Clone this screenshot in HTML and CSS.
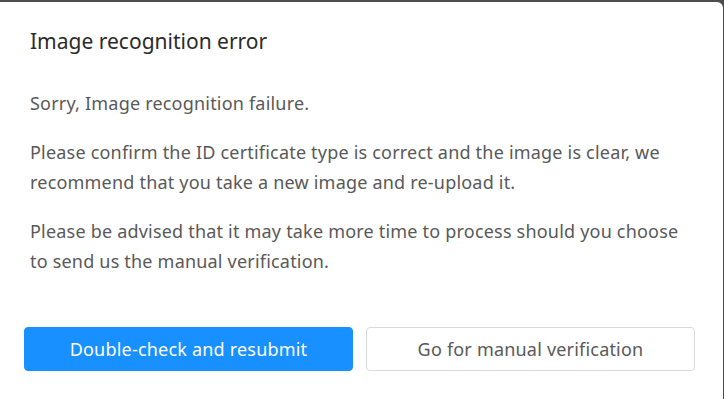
FILE: index.html
```html
<!DOCTYPE html>
<html lang="en">
<head>
  <meta charset="UTF-8" />
  <title>Image recognition error</title>
  <link rel="stylesheet" href="styles.css">
</head>
<body>
  <div class="modal">
    <h2 class="modal-title">Image recognition error</h2>
    <div class="modal-body">
      <p>Sorry, Image recognition failure.</p>
      <p>Please confirm the ID certificate type is correct and the image is clear, we recommend that you take a new image and re-upload it.</p>
      <p>Please be advised that it may take more time to process should you choose to send us the manual verification.</p>
    </div>
    <div class="modal-footer">
      <button class="btn btn-primary">Double-check and resubmit</button>
      <button class="btn btn-default">Go for manual verification</button>
    </div>
  </div>
</body>
</html>
```
FILE: styles.css
```css
body {
  margin: 0;
  background-color: #4d4d4d;
  font-family: 'Noto Sans', 'Open Sans', sans-serif;
  height: 399px;
  overflow: hidden;
}
.modal {
  margin-top: 2px;
  width: 723px;
  height: 397px;
  box-sizing: border-box;
  background: #ffffff;
  border-top-right-radius: 6px;
  padding: 25px 28px 0 24px;
}
.modal-title {
  margin: 0;
  padding: 0 6px;
  font-size: 21px;
  font-weight: normal;
  line-height: 28px;
  color: #2b2b2b;
}
.modal-body {
  padding: 0 6px;
  margin-top: 33px;
}
.modal-body p {
  margin: 0 0 19px;
  font-size: 18px;
  line-height: 30px;
  letter-spacing: 0.2px;
  color: #595959;
}
.modal-footer {
  display: flex;
  gap: 13px;
  margin-top: 51px;
}
.btn {
  flex: 1;
  height: 44px;
  border-radius: 4px;
  font-family: inherit;
  font-size: 18px;
  letter-spacing: 0.2px;
  cursor: pointer;
}
.btn-primary {
  background: #1890ff;
  border: 1px solid #1890ff;
  color: #ffffff;
}
.btn-default {
  background: #ffffff;
  border: 1px solid #d9d9d9;
  color: #595959;
}
```
